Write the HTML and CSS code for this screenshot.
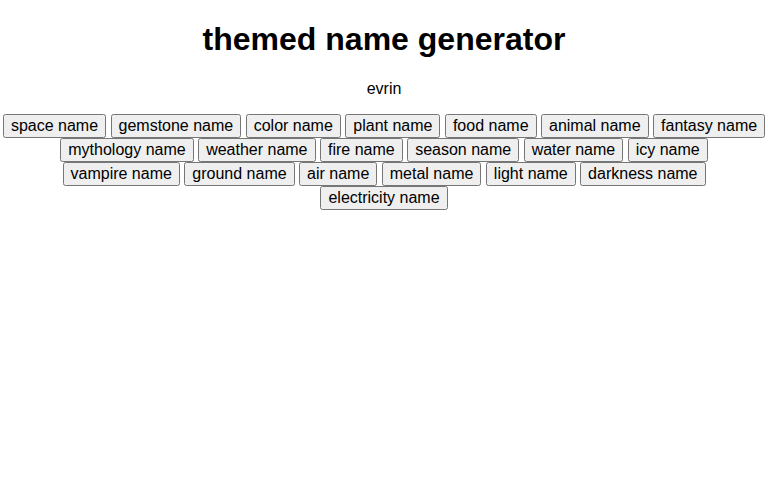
FILE: index.html
```html
<!DOCTYPE html>
<html lang="en">
<head>
    <meta charset="UTF-8">
    <meta name="viewport" content="width=device-width, initial-scale=1.0">
    <title>themed name generator</title>
    <link rel="stylesheet" href="styles.css">
</head>

<body>
    <h1>themed name generator</h1>

    <p id="result" class="result">evrin</p>

    <div class="themes" id="themes">
        <button class="theme-btn">space name</button>
        <button class="theme-btn">gemstone name</button>
        <button class="theme-btn">color name</button>
        <button class="theme-btn">plant name</button>
        <button class="theme-btn">food name</button>
        <button class="theme-btn">animal name</button>
        <button class="theme-btn">fantasy name</button>
        <button class="theme-btn">mythology name</button>
        <button class="theme-btn">weather name</button>
        <button class="theme-btn">fire name</button>
        <button class="theme-btn">season name</button>
        <button class="theme-btn">water name</button>
        <button class="theme-btn">icy name</button>
        <button class="theme-btn">vampire name</button>
        <button class="theme-btn">ground name</button>
        <button class="theme-btn">air name</button>
        <button class="theme-btn">metal name</button>
        <button class="theme-btn">light name</button>
        <button class="theme-btn">darkness name</button>
        <button class="theme-btn">electricity name</button>
    </div>
</body>
</html>
```

FILE: styles.css
```css
body {
    font-family: "Liberation Sans", Arial, sans-serif;
    text-align: center;
    color: #000;
    background-color: #fff;
    margin: 0;
}

h1 {
    font-size: 32px;
}

.result {
    font-size: 16px;
}

.theme-btn {
    font-family: "Liberation Sans", Arial, sans-serif;
    font-size: 16px;
    cursor: pointer;
}
```
